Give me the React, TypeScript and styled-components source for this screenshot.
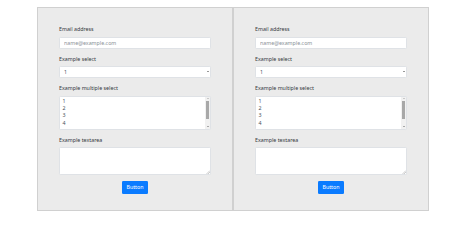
import React from "react";
import styled, { createGlobalStyle } from "styled-components";

const Global = createGlobalStyle`
  html, body { margin: 0; padding: 0; background: #ffffff; }
  * { box-sizing: border-box; }
  body { font-family: "Noto Sans", "Open Sans", Arial, sans-serif; color: #212529; }
`;

const Page = styled.div`
  padding: 7px 0 0 37px;
`;

const Row = styled.div`
  display: flex;
`;

const Column = styled.form`
  width: 196px;
  background: #ebebeb;
  border: 1px solid #d0d0d0;
  padding: 17px 21px 16px;
  display: flex;
  flex-direction: column;
`;

const Group = styled.div`
  display: flex;
  flex-direction: column;
  margin-bottom: 6px;
`;

const Label = styled.label`
  font-size: 5.3px;
  line-height: 8px;
  height: 8px;
  margin-bottom: 3.5px;
  color: #33383d;
`;

const Input = styled.input`
  display: block;
  height: 12px;
  width: 100%;
  border: 1px solid #dfe2e6;
  border-radius: 1.3px;
  background: #fff;
  padding: 0 4px;
  font-family: inherit;
  font-size: 5.3px;
  color: #495057;
  outline: none;
  &::placeholder { color: #8a9097; }
`;

const SelectWrap = styled.div`
  position: relative;
  height: 12px;
  &::after {
    content: "";
    position: absolute;
    right: 2.5px;
    top: 5px;
    border-left: 1.2px solid transparent;
    border-right: 1.2px solid transparent;
    border-top: 1.8px solid #333;
  }
`;

const Select = styled.select`
  display: block;
  appearance: none;
  -webkit-appearance: none;
  height: 12px;
  width: 100%;
  border: 1px solid #dfe2e6;
  border-radius: 1.3px;
  background: #fff;
  padding: 0 4px;
  font-family: inherit;
  font-size: 5.3px;
  line-height: 10px;
  color: #495057;
  outline: none;
`;

const ListBox = styled.div`
  height: 34px;
  display: flex;
  border: 1px solid #dfe2e6;
  border-radius: 1.3px;
  background: #fff;
  overflow: hidden;
`;

const Options = styled.div`
  flex: 1;
  padding: 1.3px 2.5px;
  display: flex;
  flex-direction: column;
`;

const Option = styled.div`
  font-size: 5.3px;
  line-height: 7.3px;
  color: #495057;
`;

const ScrollTrack = styled.div`
  width: 5px;
  display: flex;
  flex-direction: column;
  align-items: center;
  background: #f1f1f1;
  padding: 1px 0;
`;

const Arrow = styled.div<{ $down?: boolean }>`
  width: 0;
  height: 0;
  margin: 0.5px 0;
  border-left: 1.2px solid transparent;
  border-right: 1.2px solid transparent;
  ${(p) => (p.$down ? "border-top: 1.5px solid #606060;" : "border-bottom: 1.5px solid #a0a0a0;")}
`;

const Thumb = styled.div`
  width: 3.5px;
  height: 18px;
  margin-top: 1.5px;
  background: #a8a8a8;
`;

const Spacer = styled.div`
  flex: 1;
`;

const AreaWrap = styled.div`
  position: relative;
  height: 28px;
`;

const TextArea = styled.textarea`
  display: block;
  width: 100%;
  height: 28px;
  border: 1px solid #dfe2e6;
  border-radius: 1.3px;
  background: #fff;
  resize: none;
  outline: none;
  padding: 2px 4px;
  font-family: inherit;
  font-size: 5.3px;
`;

const Grip = styled.svg`
  position: absolute;
  right: 1px;
  bottom: 1px;
  width: 4px;
  height: 4px;
`;

const ButtonRow = styled.div`
  display: flex;
  justify-content: center;
`;

const Button = styled.button`
  width: 26px;
  height: 13px;
  padding: 0;
  border: none;
  border-radius: 1.3px;
  background: #0a7bff;
  color: #fff;
  font-family: inherit;
  font-size: 5.3px;
  line-height: 13px;
`;

const FormColumn: React.FC = () => (
  <Column onSubmit={(e) => e.preventDefault()}>
    <Group>
      <Label>Email address</Label>
      <Input type="email" placeholder="name@example.com" />
    </Group>
    <Group>
      <Label>Example select</Label>
      <SelectWrap>
        <Select defaultValue="1">
          <option>1</option>
          <option>2</option>
          <option>3</option>
          <option>4</option>
          <option>5</option>
        </Select>
      </SelectWrap>
    </Group>
    <Group>
      <Label>Example multiple select</Label>
      <ListBox>
        <Options>
          <Option>1</Option>
          <Option>2</Option>
          <Option>3</Option>
          <Option>4</Option>
        </Options>
        <ScrollTrack>
          <Arrow />
          <Thumb />
          <Spacer />
          <Arrow $down />
        </ScrollTrack>
      </ListBox>
    </Group>
    <Group>
      <Label>Example textarea</Label>
      <AreaWrap>
        <TextArea />
        <Grip viewBox="0 0 4 4">
          <line x1="4" y1="0.5" x2="0.5" y2="4" stroke="#9a9a9a" strokeWidth="0.5" />
          <line x1="4" y1="2" x2="2" y2="4" stroke="#9a9a9a" strokeWidth="0.5" />
        </Grip>
      </AreaWrap>
    </Group>
    <ButtonRow>
      <Button type="submit">Button</Button>
    </ButtonRow>
  </Column>
);

export default function App() {
  return (
    <>
      <Global />
      <Page>
        <Row>
          <FormColumn />
          <FormColumn />
        </Row>
      </Page>
    </>
  );
}
